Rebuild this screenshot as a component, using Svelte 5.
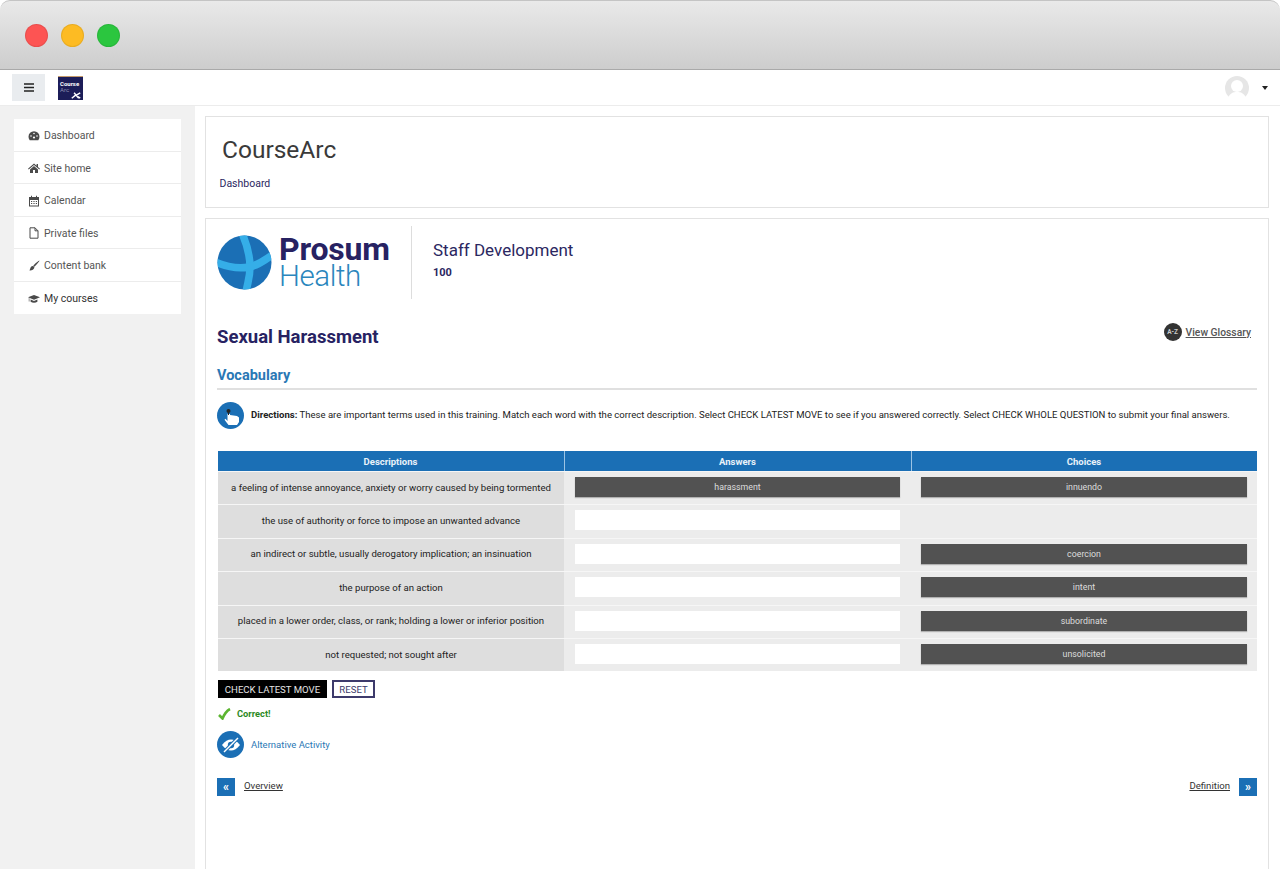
<script lang="ts">
  const navItems = [
    { label: 'Dashboard', icon: 'gauge' },
    { label: 'Site home', icon: 'home' },
    { label: 'Calendar', icon: 'calendar' },
    { label: 'Private files', icon: 'file' },
    { label: 'Content bank', icon: 'brush' },
    { label: 'My courses', icon: 'cap' }
  ];

  const rows = [
    { text: 'a feeling of intense annoyance, anxiety or worry caused by being tormented', answer: 'harassment', choice: 'innuendo' },
    { text: 'the use of authority or force to impose an unwanted advance', answer: '', choice: '' },
    { text: 'an indirect or subtle, usually derogatory implication; an insinuation', answer: '', choice: 'coercion' },
    { text: 'the purpose of an action', answer: '', choice: 'intent' },
    { text: 'placed in a lower order, class, or rank; holding a lower or inferior position', answer: '', choice: 'subordinate' },
    { text: 'not requested; not sought after', answer: '', choice: 'unsolicited' }
  ];
</script>

<div class="window">
  <header class="titlebar">
    <span class="dot red"></span>
    <span class="dot yellow"></span>
    <span class="dot green"></span>
  </header>

  <nav class="topnav">
    <button class="burger" aria-label="Toggle menu">
      <svg width="10" height="9" viewBox="0 0 10 9"><path d="M0 1h10M0 4.500h10M0 8h10" stroke="#222" stroke-width="1.600" /></svg>
    </button>
    <div class="brand">
      <span class="b1">Course</span>
      <span class="b2">Arc</span>
      <svg class="b3" width="10" height="7" viewBox="0 0 13 9"><path d="M1 8l5-4M4 1l6 7M7 4l5-3M9 6l3 2" stroke="#fff" stroke-width="1.800" /></svg>
    </div>
    <div class="user">
      <svg width="26" height="26" viewBox="0 0 26 26">
        <circle cx="13" cy="13" r="12" fill="#e6e6e6" />
        <circle cx="13" cy="11" r="6" fill="#fff" />
        <path d="M4 23c2-5 5-6 9-6s7 1 9 6a12 12 0 0 1-18 0z" fill="#fff" />
      </svg>
      <span class="caret"></span>
    </div>
  </nav>

  <div class="body">
    <aside class="sidebar">
      <ul class="menu">
        {#each navItems as item}
          <li class:current={item.icon === 'cap'}>
            <svg class="ico" width="12" height="12" viewBox="0 0 12 12" fill="#4a4a4a">
              {#if item.icon === 'gauge'}
                <path d="M6 1.200a5.500 5.500 0 0 0-5.500 5.500c0 1.300.4 2.500 1.200 3.500h8.600c.8-1 1.200-2.200 1.200-3.500A5.500 5.500 0 0 0 6 1.200z" />
                <circle cx="6" cy="7.500" r="1.100" fill="#fff" /><circle cx="3" cy="6" r=".8" fill="#fff" /><circle cx="9" cy="6" r=".8" fill="#fff" /><circle cx="6" cy="3.500" r=".8" fill="#fff" />
              {:else if item.icon === 'home'}
                <path d="M6 1.500L0 6.800l.7.700L6 3l5.300 4.500.7-.7-2-1.800V2H8.600v1.800zM2 7.500V11h3V8h2v3h3V7.500L6 4z" />
              {:else if item.icon === 'calendar'}
                <path fill-rule="evenodd" d="M1 2h2V.8h1V2h4V.8h1V2h2v9.500H1zM2 5v5.500h8V5z" />
                <path d="M3 6h1.200v1H3zM5.400 6h1.200v1H5.400zM7.800 6H9v1H7.800zM3 8h1.200v1H3zM5.400 8h1.200v1H5.400zM7.800 8H9v1H7.800z" />
              {:else if item.icon === 'file'}
                <path d="M2 .8h5l3 3v7.400H2zM7 .8v3h3" fill="none" stroke="#4a4a4a" />
              {:else if item.icon === 'brush'}
                <path d="M11.500.5c.3.300-3.500 5-5 6.200L5.300 5.500C6.500 4 11.200.2 11.500.5zM4.800 6c1 0 1.700.8 1.500 1.800-.3 1.800-3 3-5.300 2.500 1-.6 1-1.300 1.400-2.400C2.800 7 3.600 6 4.800 6z" />
              {:else}
                <path d="M6 2L0 4.300l6 2.400 6-2.400zM2.600 6.500v2.200c1.800 1.300 5 1.300 6.800 0V6.500L6 7.900zM.8 5v3.500h.6V5.300z" />
              {/if}
            </svg>
            <span>{item.label}</span>
          </li>
        {/each}
      </ul>
    </aside>

    <main class="content">
      <section class="card head">
        <h1>CourseArc</h1>
        <a href="#top">Dashboard</a>
      </section>

      <section class="card lesson">
        <div class="course">
          <div class="logo">
            <svg width="55" height="55" viewBox="0 0 55 55">
              <defs><clipPath id="globe"><circle cx="27.500" cy="27.500" r="27" /></clipPath></defs>
              <circle cx="27.500" cy="27.500" r="27" fill="#1b6fb5" />
              <g clip-path="url(#globe)" fill="none" stroke="#35aee8" stroke-width="7.500">
                <path d="M25 -2C31 12 33 22 33 32S31 46 29 57" />
                <path d="M-2 27C10 32 22 34 32 32S46 26 57 19" />
              </g>
            </svg>
            <div class="wordmark">
              <span class="prosum">Prosum</span>
              <span class="health">Health</span>
            </div>
          </div>
          <div class="course-info">
            <h2>Staff Development</h2>
            <strong>100</strong>
          </div>
        </div>

        <div class="title-row">
          <h3>Sexual Harassment</h3>
          <a class="glossary" href="#top"><span class="az">A-Z</span><span class="u">View Glossary</span></a>
        </div>

        <h4>Vocabulary</h4>

        <div class="directions">
          <span class="round">
            <svg width="20" height="20" viewBox="0 0 20 20">
              <path d="M6.500 8V15L4.500 12.800 3.500 13.800 7.500 19H16l2-3V11.500L16 10 9 9V8z" fill="#fff" />
              <circle cx="7.500" cy="5" r="2" fill="#222" />
              <path d="M7.500 5V9" stroke="#222" stroke-width="1" />
            </svg>
          </span>
          <p><b>Directions:</b> These are important terms used in this training. Match each word with the correct description. Select CHECK LATEST MOVE to see if you answered correctly. Select CHECK WHOLE QUESTION to submit your final answers.</p>
        </div>

        <div class="table">
          <div class="th">Descriptions</div>
          <div class="th">Answers</div>
          <div class="th">Choices</div>
          {#each rows as row}
            <div class="td desc">{row.text}</div>
            <div class="td mid">
              <div class={row.answer ? 'chip' : 'slot'}>{row.answer}</div>
            </div>
            <div class="td">
              {#if row.choice}<div class="chip">{row.choice}</div>{/if}
            </div>
          {/each}
        </div>

        <div class="actions">
          <button class="check">CHECK LATEST MOVE</button>
          <button class="reset">RESET</button>
        </div>

        <div class="correct">
          <svg width="13" height="12" viewBox="0 0 13 12"><path d="M1 7L4.500 10.500C6 7 8 3 12 1" fill="none" stroke="#5cb531" stroke-width="2.600" /></svg>
          <span>Correct!</span>
        </div>

        <div class="alt">
          <span class="round big">
            <svg width="20" height="16" viewBox="0 0 20 16">
              <path d="M1 8c3-4 6-5.500 9-5.500S16 4 19 8c-3 4-6 5.500-9 5.500S4 12 1 8z" fill="#fff" />
              <circle cx="10" cy="8" r="3.200" fill="#1b6fb5" />
              <path d="M3 15L17 1" stroke="#1b6fb5" stroke-width="3.500" />
              <path d="M3 15L17 1" stroke="#fff" stroke-width="1.400" />
            </svg>
          </span>
          <a href="#top">Alternative Activity</a>
        </div>

        <div class="pager">
          <a href="#top" class="page"><span class="sq">«</span><span class="u">Overview</span></a>
          <a href="#top" class="page"><span class="u">Definition</span><span class="sq">»</span></a>
        </div>
      </section>
    </main>
  </div>
</div>

<style>
  :global(body) {
    background: #fff;
    overflow: hidden;
  }
  .window {
    width: 1280px;
    height: 869px;
    overflow: hidden;
    display: flex;
    flex-direction: column;
    font-family: Roboto, "Liberation Sans", sans-serif;
    color: #333;
    background: #fff;
  }
  .titlebar {
    height: 70px;
    flex: none;
    box-sizing: border-box;
    display: flex;
    align-items: center;
    gap: 13px;
    padding: 0 0 0 25px;
    border-radius: 10px 10px 0 0;
    border-top: 1px solid #c4c4c4;
    border-bottom: 1px solid #a9a9a9;
    background: linear-gradient(#e9e9e9, #cdcdcd);
  }
  .dot {
    width: 23px;
    height: 23px;
    box-sizing: border-box;
    border-radius: 50%;
    border: 1px solid rgba(0, 0, 0, 0.08);
  }
  .red {
    background: #fd5453;
  }
  .yellow {
    background: #fdbb23;
  }
  .green {
    background: #2bc63f;
  }
  .topnav {
    height: 36px;
    flex: none;
    box-sizing: border-box;
    display: flex;
    align-items: center;
    padding-left: 12px;
    border-bottom: 1px solid #ececec;
    background: #fff;
  }
  .burger {
    width: 33px;
    height: 27px;
    border: 0;
    padding: 0;
    display: grid;
    place-items: center;
    background: #e9ecef;
  }
  .brand {
    position: relative;
    width: 25px;
    height: 24px;
    margin-left: 13px;
    box-sizing: border-box;
    padding: 4px 0 0 2px;
    background: #1c1d58;
    border-top: 1px solid #c49a6c;
    color: #fff;
    font-size: 6px;
    line-height: 6px;
    font-weight: 700;
  }
  .brand span {
    display: block;
  }
  .brand .b2 {
    color: #8d8fb0;
    font-weight: 400;
  }
  .b3 {
    position: absolute;
    right: 2px;
    bottom: 1px;
  }
  .user {
    margin-left: auto;
    display: flex;
    align-items: center;
    gap: 12px;
    padding-right: 12px;
  }
  .user svg {
    display: block;
  }
  .caret {
    width: 0;
    height: 0;
    border: 3px solid transparent;
    border-top: 4px solid #222;
    border-bottom: 0;
  }
  .body {
    flex: 1;
    display: flex;
    min-height: 0;
  }
  .sidebar {
    width: 195px;
    flex: none;
    box-sizing: border-box;
    padding: 13px 14px 0;
    background: #f1f1f1;
  }
  .menu {
    list-style: none;
    margin: 0;
    padding: 0;
    background: #fff;
  }
  .menu li {
    height: 32.500px;
    box-sizing: border-box;
    display: flex;
    align-items: center;
    gap: 4px;
    padding: 2px 0 0 14px;
    font-size: 10.500px;
    color: #555;
    border-bottom: 1px solid #ececec;
  }
  .menu li:last-child {
    border-bottom: 0;
  }
  .menu li.current {
    color: #333;
  }
  .content {
    flex: 1;
    min-width: 0;
    box-sizing: border-box;
    padding: 10px 11px 0 10px;
    display: flex;
    flex-direction: column;
    gap: 10px;
  }
  .card {
    border: 1px solid #e2e2e2;
    background: #fff;
  }
  .head {
    height: 92px;
    box-sizing: border-box;
    padding: 18px 14px 0 13.500px;
  }
  .head h1 {
    margin: 0 0 0 2.500px;
    font-size: 24.500px;
    line-height: 30px;
    font-weight: 400;
    color: #3a3a3a;
  }
  .head a {
    display: block;
    margin-top: 12px;
    font-size: 10.500px;
    color: #2b2761;
    text-decoration: none;
  }
  .lesson {
    flex: 1;
    border-bottom: 0;
    padding: 7px 11px 0 11px;
  }
  .course {
    display: flex;
    height: 73px;
  }
  .logo {
    width: 195px;
    display: flex;
    gap: 7px;
    align-items: center;
    border-right: 1px solid #ddd;
    margin-right: 21px;
    box-sizing: border-box;
  }
  .logo svg {
    flex: none;
    margin-top: -1px;
  }
  .wordmark {
    display: flex;
    flex-direction: column;
    margin-top: -1px;
  }
  .prosum {
    font-size: 32px;
    line-height: 28px;
    font-weight: 700;
    letter-spacing: -0.2px;
    color: #272262;
  }
  .health {
    font-size: 29.500px;
    line-height: 27px;
    font-weight: 300;
    letter-spacing: -0.4px;
    color: #2a86bd;
  }
  .course-info {
    padding-top: 13px;
  }
  .course-info h2 {
    margin: 0;
    font-size: 17px;
    line-height: 22px;
    font-weight: 400;
    color: #2b2761;
  }
  .course-info strong {
    display: block;
    margin-top: 5px;
    font-size: 11px;
    line-height: 13px;
    color: #2b2761;
  }
  .title-row {
    display: flex;
    justify-content: space-between;
    align-items: center;
    margin-top: 26px;
    height: 24px;
    padding-right: 6px;
  }
  .title-row h3 {
    margin: 0;
    font-size: 18.500px;
    font-weight: 700;
    color: #272262;
  }
  .glossary {
    display: flex;
    align-items: center;
    gap: 4px;
    margin-top: -10px;
    font-size: 10.300px;
    font-weight: 500;
    color: #555;
    text-decoration: none;
  }
  .az {
    width: 18px;
    height: 18px;
    border-radius: 50%;
    background: #333;
    color: #ccc;
    font-size: 6.500px;
    font-weight: 700;
    display: grid;
    place-items: center;
  }
  .u {
    text-decoration: underline;
  }
  .lesson h4 {
    margin: 17px 0 0;
    padding-bottom: 3px;
    font-size: 14.500px;
    line-height: 19px;
    font-weight: 700;
    color: #2a78b5;
    border-bottom: 2px solid #e0e0e0;
  }
  .directions {
    display: flex;
    align-items: center;
    gap: 7px;
    margin-top: 12px;
  }
  .round {
    width: 27px;
    height: 27px;
    flex: none;
    border-radius: 50%;
    background: #1b6fb5;
    display: grid;
    place-items: center;
  }
  .directions p {
    margin: -3px 0 0;
    font-size: 9.560px;
    color: #222;
    white-space: nowrap;
  }
  .table {
    display: grid;
    grid-template-columns: 346px 347px 346px;
    margin: 22px 0 0 1px;
    gap: 0;
  }
  .th {
    height: 20px;
    padding-right: 1px;
    display: grid;
    place-items: center;
    background: #1b6fb5;
    color: #e9f2f9;
    font-size: 9.500px;
    font-weight: 700;
    border-left: 1px solid #9cc4e4;
  }
  .th:first-child {
    border-left: 0;
  }
  .td {
    height: 33.400px;
    box-sizing: border-box;
    padding: 5px 10px 0;
    background: #ececec;
    border-top: 1px solid #f6f6f6;
  }
  .td.mid {
    padding: 5px 11px 0;
  }
  .td.desc {
    display: grid;
    place-items: center;
    padding: 0 0 2px;
    background: #dedede;
    color: #222;
    font-size: 9.600px;
  }
  .chip,
  .slot {
    height: 20px;
    display: grid;
    place-items: center;
    font-size: 8.800px;
  }
  .chip {
    background: #525252;
    color: #ddd;
    box-shadow: 0 1px 1px rgba(0, 0, 0, 0.25);
  }
  .slot {
    background: #fff;
  }
  .actions {
    display: flex;
    gap: 5px;
    margin: 9px 0 0 1px;
  }
  .actions button {
    height: 18px;
    padding: 0;
    font-family: inherit;
    font-size: 9.600px;
    box-sizing: border-box;
  }
  .check {
    width: 109px;
    border: 0;
    background: #000;
    color: #e4e4e4;
  }
  .reset {
    width: 43px;
    border: 2px solid #3d3a6b;
    background: #fff;
    color: #3d3a6b;
  }
  .correct {
    display: flex;
    align-items: center;
    gap: 6px;
    margin-top: 9px;
    padding-left: 1px;
    height: 13px;
    font-size: 9.300px;
    font-weight: 700;
    color: #2b8a1e;
  }
  .alt {
    display: flex;
    align-items: center;
    gap: 7px;
    margin-top: 11px;
    font-size: 9.500px;
  }
  .alt a {
    color: #2a78b5;
    text-decoration: none;
  }
  .pager {
    display: flex;
    justify-content: space-between;
    margin-top: 20px;
  }
  .page {
    display: flex;
    align-items: center;
    gap: 9px;
    font-size: 9.600px;
    color: #333;
    text-decoration: none;
  }
  .page .u {
    padding-bottom: 4px;
  }
  .sq {
    width: 18px;
    height: 18px;
    display: grid;
    place-items: center;
    background: #1b6fb5;
    color: #fff;
    font-size: 12px;
    line-height: 1;
    font-weight: 700;
  }
</style>
